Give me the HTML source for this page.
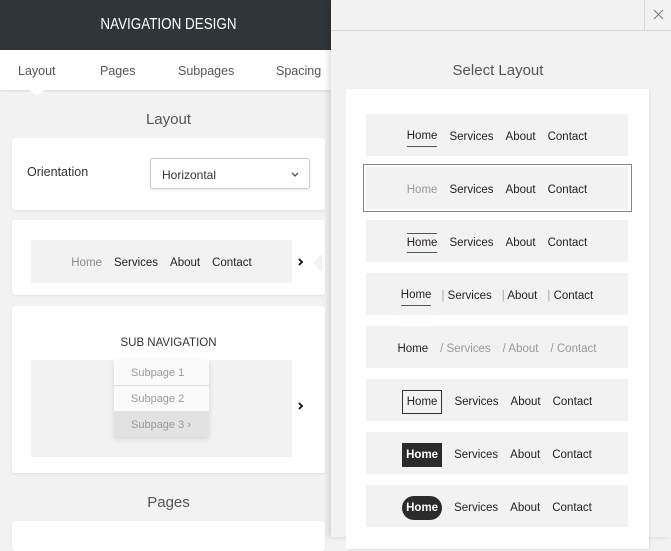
<!DOCTYPE html>
<html><head><style>
*{box-sizing:border-box;margin:0;padding:0}
body{width:671px;height:537px;overflow:hidden;background:#f2f2f2;font-family:"Liberation Sans",sans-serif;position:relative;color:#333}
.abs{position:absolute}
.hdr{left:0;top:0;width:331px;height:50px;background:#2f3538}
.hdr div{position:absolute;left:0;width:337px;top:16px;text-align:center;color:#fff;font-size:16px;transform:scaleX(0.84)}
.tabs{left:0;top:50px;width:331px;height:40px;background:#fff;font-size:12.5px;color:#555;box-shadow:0 1px 2px rgba(0,0,0,.1)}
.tabs span{position:absolute;top:14px}
.notch{left:28px;top:89px;width:0;height:0;border-left:9px solid transparent;border-right:9px solid transparent;border-top:7px solid #fff}
.card{background:#fff;border-radius:3px;left:12px;width:313px;box-shadow:0 1px 2px rgba(0,0,0,.08)}
.ttl{font-size:15px;color:#555;text-align:center}
.nav{display:flex;justify-content:center;align-items:center;font-size:11.5px;color:#222;background:#f2f2f2;padding-top:3px}
.nav span{margin:0 6px}
.rp{left:331px;top:0;width:340px;height:537px;background:#f2f2f2;box-shadow:-3px 0 5px rgba(0,0,0,.12)}
.it{left:366px;width:262px;height:42px}
</style></head><body>
<div class="abs hdr"><div>NAVIGATION DESIGN</div></div>
<div class="abs tabs"><span style="left:18px">Layout</span><span style="left:100px">Pages</span><span style="left:178px">Subpages</span><span style="left:276px">Spacing</span></div>
<div class="abs notch"></div>
<div class="abs ttl" style="left:0;width:337px;top:111px">Layout</div>
<div class="abs card" style="top:138px;height:72px">
<div class="abs" style="left:15px;top:27px;font-size:12.5px;color:#333">Orientation</div>
<div class="abs" style="left:138px;top:20px;width:160px;height:31px;border:1px solid #ccc;border-radius:3px;box-shadow:0 1px 2px rgba(0,0,0,.1);font-size:12px;padding:9px 0 0 11px;color:#333">Horizontal<svg class="abs" style="right:10px;top:13px" width="8" height="6"><path d="M1 1l3 3 3-3" stroke="#555" fill="none" stroke-width="1.3"/></svg></div>
</div>
<div class="abs card" style="top:220px;height:75px">
<div class="abs nav" style="left:19px;top:20px;width:261px;height:43px"><span style="color:#888">Home</span><span>Services</span><span>About</span><span>Contact</span></div>
<svg class="abs" style="left:286px;top:38px" width="6" height="8"><path d="M1 1l3 3-3 3" stroke="#111" fill="none" stroke-width="1.8"/></svg>
</div>
<div class="abs card" style="top:306px;height:167px">
<div class="abs" style="left:0;width:313px;top:31px;text-align:center;font-size:11.5px;color:#333">SUB NAVIGATION</div>
<div class="abs" style="left:19px;top:54px;width:261px;height:97px;background:#f2f2f2"></div>
<div class="abs" style="left:102px;top:54px;width:95px;height:77px;box-shadow:0 2px 5px rgba(0,0,0,.12);font-size:11px;color:#999">
<div style="height:26px;background:#fafafa;border-bottom:1px solid #ddd;padding:7px 0 0 17px">Subpage 1</div>
<div style="height:25px;background:#fafafa;padding:7px 0 0 17px">Subpage 2</div>
<div style="height:26px;background:#e2e2e2;padding:8px 0 0 17px">Subpage 3 ›</div>
</div>
<svg class="abs" style="left:286px;top:96px" width="6" height="8"><path d="M1 1l3 3-3 3" stroke="#111" fill="none" stroke-width="1.8"/></svg>
</div>
<div class="abs ttl" style="left:0;width:337px;top:494px">Pages</div>
<div class="abs card" style="top:521px;height:30px"></div>

<div class="abs rp"></div>
<div class="abs" style="left:331px;top:0;width:340px;height:31px;border-bottom:1px solid #d3d8dc"></div>
<div class="abs" style="left:644px;top:0;width:27px;height:30px;border-left:1px solid #d3d8dc"><svg class="abs" style="left:8px;top:9px" width="11" height="11"><path d="M1 1l9 9M10 1l-9 9" stroke="#777" stroke-width="1"/></svg></div>
<div class="abs" style="left:331px;width:334px;top:62px;text-align:center;font-size:15px;color:#555">Select Layout</div>
<div class="abs" style="left:313px;top:254px;width:0;height:0;border-top:9px solid transparent;border-bottom:9px solid transparent;border-right:9px solid #f2f2f2"></div>
<div class="abs" style="left:346px;top:89px;width:303px;height:460px;background:#fff;box-shadow:1px 1px 2px rgba(0,0,0,.08)"></div>
<div class="abs nav it" style="top:114px"><span style="border-bottom:1px solid #455a64;padding:3px 0 4px">Home</span><span>Services</span><span>About</span><span>Contact</span></div>
<div class="abs" style="left:363px;top:164px;width:269px;height:48px;border:1px solid #888"></div>
<div class="abs nav it" style="top:167px"><span style="color:#999">Home</span><span>Services</span><span>About</span><span>Contact</span></div>
<div class="abs nav it" style="top:220px"><span style="border-top:1px solid #455a64;border-bottom:1px solid #455a64;padding:3px 0">Home</span><span>Services</span><span>About</span><span>Contact</span></div>
<div class="abs nav it" style="top:273px"><span style="border-bottom:1px solid #455a64;padding:3px 0 4px">Home</span><span style="margin-left:4px"><b style="font-weight:normal;color:#aaa">|</b> Services</span><span style="margin-left:4px"><b style="font-weight:normal;color:#aaa">|</b> About</span><span style="margin-left:4px"><b style="font-weight:normal;color:#aaa">|</b> Contact</span></div>
<div class="abs nav it" style="top:326px;color:#999"><span style="color:#222">Home</span><span>/ Services</span><span>/ About</span><span>/ Contact</span></div>
<div class="abs nav it" style="top:379px"><span style="border:1px solid #333;padding:5px 4px">Home</span><span>Services</span><span>About</span><span>Contact</span></div>
<div class="abs nav it" style="top:432px"><span style="background:#2b2b2b;color:#fff;font-weight:bold;padding:6px 4px">Home</span><span>Services</span><span>About</span><span>Contact</span></div>
<div class="abs nav it" style="top:485px"><span style="background:#2b2b2b;color:#fff;font-weight:bold;padding:6px 4px;border-radius:12px">Home</span><span>Services</span><span>About</span><span>Contact</span></div>
</body></html>
